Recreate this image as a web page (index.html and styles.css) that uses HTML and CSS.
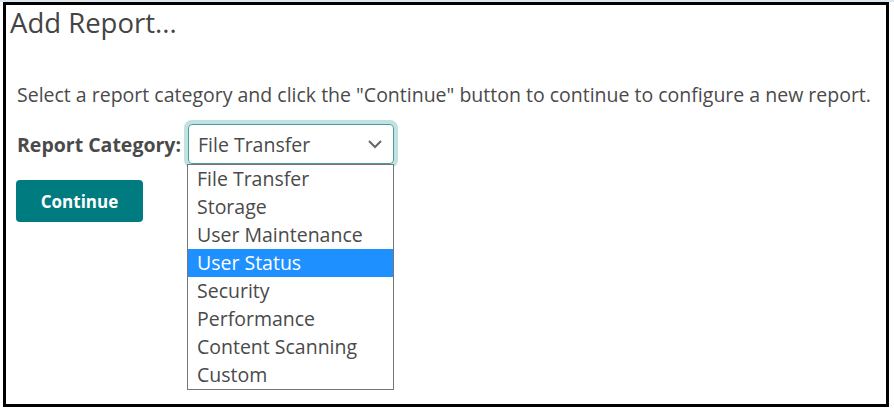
FILE: index.html
```html
<!DOCTYPE html>
<html>
<head>
<meta charset="utf-8">
<link rel="stylesheet" href="styles.css">
</head>
<body>
<div class="topline"></div>
<div class="frame">
  <h1 class="title">Add Report...</h1>
  <p class="desc">Select a report category and click the "Continue" button to continue to configure a new report.</p>
  <div class="row">
    <span class="label">Report Category:</span>
    <div class="select-wrap">
      <div class="select">
        <span>File Transfer</span>
        <svg class="chev" width="16" height="10" viewBox="0 0 16 10"><path d="M2 2 L8 8 L14 2" fill="none" stroke="#666" stroke-width="2"/></svg>
      </div>
      <ul class="list">
        <li>File Transfer</li>
        <li>Storage</li>
        <li>User Maintenance</li>
        <li class="hl">User Status</li>
        <li>Security</li>
        <li>Performance</li>
        <li>Content Scanning</li>
        <li>Custom</li>
      </ul>
    </div>
  </div>
  <button class="btn">Continue</button>
</div>
</body>
</html>
```
FILE: styles.css
```css
html, body { margin: 0; padding: 0; background: #fff; }
body { font-family: "Open Sans", "Noto Sans", sans-serif; color: #4a4a4a; width: 894px; height: 412px; overflow: hidden; }
.topline { height: 2px; background: #dde5ee; }
.frame {
  margin-left: 3px;
  width: 880px;
  height: 399px;
  border: 3px solid #000;
  box-sizing: content-box;
  padding: 0;
}
.title {
  margin: 0;
  padding: 1px 0 0 4px;
  height: 36px;
  font-size: 27.5px;
  font-weight: 500;
  line-height: 34px;
  color: #444;
}
.desc {
  margin: 40px 0 0 11px;
  font-size: 19.5px;
  line-height: 26px;
}
.row {
  display: flex;
  align-items: center;
  margin: 16px 0 0 11px;
  gap: 7px;
}
.label { font-weight: 700; font-size: 19.5px; }
.select-wrap { position: relative; }
.select {
  width: 206px;
  height: 40px;
  box-sizing: border-box;
  border: 1px solid #4e9a9a;
  border-radius: 4px;
  box-shadow: 0 0 0 4px #bfe3e3;
  display: flex;
  align-items: center;
  justify-content: space-between;
  padding: 0 10px 0 9px;
  font-size: 19.5px;
}
.chev { display: block; }
.list {
  position: absolute;
  left: -1px;
  top: 40px;
  width: 207px;
  box-sizing: border-box;
  margin: 0;
  padding: 0;
  list-style: none;
  background: #fff;
  border: 1px solid #767676;
  z-index: 2;
}
.list li {
  height: 28px;
  line-height: 28px;
  padding-left: 9px;
  font-size: 19.5px;
}
.list li.hl { background: #1e90ff; color: #fff; }
.btn {
  display: block;
  margin: 16px 0 0 10px;
  width: 127px;
  height: 42px;
  border: 0;
  border-radius: 4px;
  background: #007b80;
  color: #fff;
  font-family: "Open Sans", sans-serif;
  font-weight: 700;
  font-size: 17px;
}
```
